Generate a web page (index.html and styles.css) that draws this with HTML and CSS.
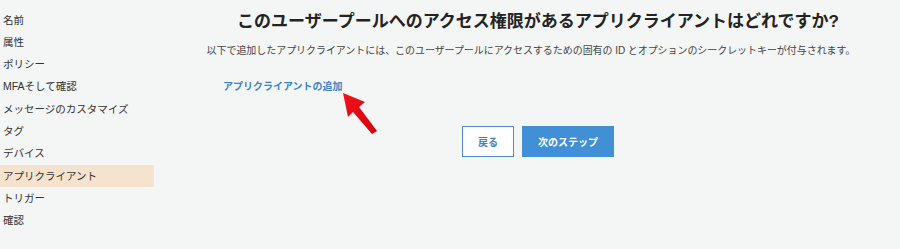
FILE: index.html
```html
<!DOCTYPE html>
<html lang="ja">

<head>
    <meta charset="UTF-8">
    <meta name="viewport" content="width=device-width, initial-scale=1.0">
    <title>アプリクライアント</title>
    <link rel="stylesheet" href="styles.css">
</head>

<body>

    <div class="side">
        <div class="item">名前</div>
        <div class="item">属性</div>
        <div class="item">ポリシー</div>
        <div class="item">MFAそして確認</div>
        <div class="item">メッセージのカスタマイズ</div>
        <div class="item">タグ</div>
        <div class="item">デバイス</div>
        <div class="item active">アプリクライアント</div>
        <div class="item">トリガー</div>
        <div class="item">確認</div>
    </div>

    <div class="main">
        <h1 class="title">このユーザープールへのアクセス権限があるアプリクライアントはどれですか?</h1>
        <p class="desc">以下で追加したアプリクライアントには、このユーザープールにアクセスするための固有の ID とオプションのシークレットキーが付与されます。</p>
        <a class="add" href="#">アプリクライアントの追加</a>

        <div class="buttons">
            <button class="back">戻る</button>
            <button class="next">次のステップ</button>
        </div>

        <svg class="arrow" width="40" height="48" viewBox="340 90 40 48">
            <defs>
                <linearGradient id="red" x1="0" y1="0" x2="1" y2="1">
                    <stop offset="0" stop-color="#f2121c" />
                    <stop offset="1" stop-color="#d4000a" />
                </linearGradient>
            </defs>
            <polygon points="343,93 365,102 359,107 377,131 372,134 353,112 348,117" fill="url(#red)" />
        </svg>
    </div>

</body>

</html>
```

FILE: styles.css
```css
* {
    box-sizing: border-box;
}

html,
body {
    margin: 0;
    height: 100%;
    background-color: #f4f5f5;
    font-family: "Liberation Sans", "Noto Sans CJK JP", sans-serif;
    color: #333;
}

body {
    display: flex;
}

.side {
    width: 154px;
    padding-top: 8.5px;
    flex-shrink: 0;
}

.item {
    height: 22.3px;
    line-height: 22.3px;
    padding-left: 3px;
    font-size: 10.5px;
    color: #333;
}

.active {
    background-color: #f6e3cd;
}

.main {
    flex: 1;
    position: relative;
    padding-left: 22px;
    padding-top: 12px;
}

.title {
    margin: 0;
    font-size: 17px;
    line-height: 20px;
    font-weight: bold;
    color: #232323;
    text-align: center;
    white-space: nowrap;
}

.desc {
    margin: 12px 0 0;
    padding-right: 14px;
    font-size: 10px;
    line-height: 14px;
    letter-spacing: -0.06px;
    color: #444;
    text-align: center;
    white-space: nowrap;
}

.add {
    display: block;
    margin-top: 22px;
    padding-left: 47px;
    font-size: 10px;
    line-height: 14px;
    font-weight: bold;
    color: #3d86c6;
    text-decoration: none;
}

.buttons {
    display: flex;
    justify-content: center;
    gap: 8px;
    margin-top: 32px;
}

.buttons button {
    height: 31px;
    font-family: inherit;
    font-size: 10px;
    font-weight: bold;
    padding: 0;
    cursor: pointer;
}

.back {
    width: 52px;
    background-color: #fff;
    border: 1.5px solid #4d8cc4;
    color: #3f80bd;
}

.next {
    width: 92px;
    background-color: #418fd5;
    border: 1px solid #418fd5;
    color: #fff;
}

.arrow {
    position: absolute;
    left: 186px;
    top: 90px;
}
```
